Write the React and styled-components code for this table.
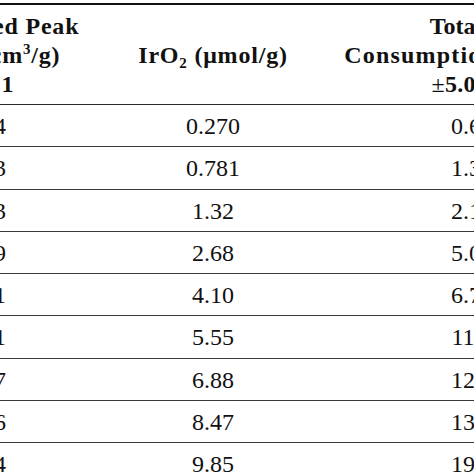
import React from "react";
import styled, { createGlobalStyle } from "styled-components";

const GlobalStyle = createGlobalStyle`
  html, body {
    margin: 0;
    padding: 0;
    background: #ffffff;
    overflow: hidden;
  }
  body {
    font-family: "Liberation Serif", "Times New Roman", serif;
    color: #111;
  }
`;

const Page = styled.div`
  width: 474px;
  height: 474px;
  overflow: hidden;
  padding-top: 3px;
  box-sizing: border-box;
`;

const Table = styled.div`
  width: 744px;
  margin-left: -122px;
  border-top: 2px solid #111;
`;

const Row = styled.div`
  display: grid;
  grid-template-columns: 226px 218px 300px;
  height: ${(p) => (p.$head ? "100px" : "42.3px")};
  box-sizing: border-box;
  border-bottom: 1px solid ${(p) => (p.$head ? "#2a2a2a" : "#3a3a3a")};
`;

const HeadCell = styled.div`
  display: flex;
  flex-direction: column;
  justify-content: center;
  align-items: center;
  text-align: center;
  font-weight: bold;
  font-size: 24px;
  line-height: 29px;
  white-space: nowrap;
  padding-top: 1px;
`;

const Line = styled.span`
  letter-spacing: ${(p) => p.$spacing || "0.8px"};
`;

const Cell = styled.div`
  text-align: center;
  font-size: 24px;
  line-height: 41px;
  padding-top: 1px;
  white-space: nowrap;
`;

const Sup = styled.sup`
  font-size: 15px;
  line-height: 0;
  vertical-align: 9px;
`;

const Sub = styled.sub`
  font-size: 15px;
  line-height: 0;
  vertical-align: -5px;
`;

const Thin = styled.span`
  font-weight: normal;
`;

const rows = [
  ["1.4", "0.270", "0.65"],
  ["2.3", "0.781", "1.36"],
  ["3.3", "1.32", "2.12"],
  ["5.9", "2.68", "5.03"],
  ["7.1", "4.10", "6.75"],
  ["9.1", "5.55", "11.2"],
  ["9.7", "6.88", "12.6"],
  ["9.6", "8.47", "13.9"],
  ["9.4", "9.85", "19.4"],
];

export default function App() {
  return (
    <Page>
      <GlobalStyle />
      <Table>
        <Row $head>
          <HeadCell>
            <Line>Integrated Peak</Line>
            <Line>
              Area (cm<Sup>3</Sup>/g)
            </Line>
            <Line>
              <Thin>±</Thin>0.1
            </Line>
          </HeadCell>
          <HeadCell>
            <Line>
              IrO<Sub>2</Sub> (μmol/g)
            </Line>
          </HeadCell>
          <HeadCell>
            <Line $spacing="0px">
              Total H<Sub>2</Sub>
            </Line>
            <Line $spacing="1.2px">Consumption (μmol/g)</Line>
            <Line $spacing="0.3px">
              <Thin>±</Thin>5.00%
            </Line>
          </HeadCell>
        </Row>
        {rows.map((r, i) => (
          <Row key={i}>
            {r.map((v, j) => (
              <Cell key={j}>{v}</Cell>
            ))}
          </Row>
        ))}
      </Table>
    </Page>
  );
}
